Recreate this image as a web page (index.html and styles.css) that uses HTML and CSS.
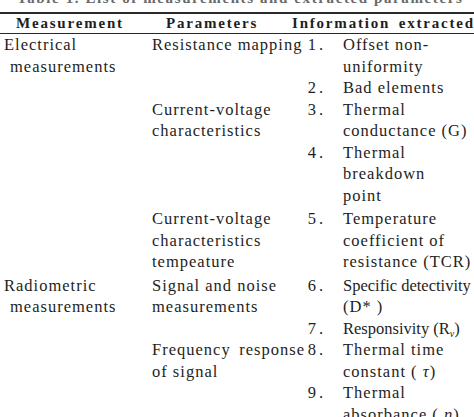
FILE: index.html
```html
<!DOCTYPE html>
<html>
<head>
<meta charset="utf-8">
<link rel="stylesheet" href="styles.css">
</head>
<body>
<div class="caption">Table 1. List of measurements and extracted parameters</div>
<div class="table">
  <div class="head">
    <div>Measurement</div>
    <div>Parameters</div>
    <div>Information extracted</div>
  </div>
  <div class="body">
    <div class="c1">Electrical<br><span class="ind">measurements</span></div>
    <div class="c2">Resistance mapping</div>
    <div class="num">1.</div>
    <div class="c4">Offset non-<br>uniformity</div>

    <div class="c1"></div>
    <div class="c2"></div>
    <div class="num">2.</div>
    <div class="c4">Bad elements</div>

    <div class="c1"></div>
    <div class="c2">Current-voltage<br>characteristics</div>
    <div class="num">3.</div>
    <div class="c4">Thermal<br>conductance (G)</div>

    <div class="c1"></div>
    <div class="c2"></div>
    <div class="num">4.</div>
    <div class="c4">Thermal<br>breakdown<br>point</div>

    <div class="c1 gap"></div>
    <div class="c2 gap">Current-voltage<br>characteristics<br>tempeature</div>
    <div class="num gap">5.</div>
    <div class="c4 gap">Temperature<br>coefficient of<br>resistance (TCR)</div>

    <div class="c1 gap">Radiometric<br><span class="ind">measurements</span></div>
    <div class="c2 gap">Signal and noise<br>measurements</div>
    <div class="num gap">6.</div>
    <div class="c4 gap"><span class="tight">Specific detectivity</span><br>(D* )</div>

    <div class="c1"></div>
    <div class="c2"></div>
    <div class="num">7.</div>
    <div class="c4"><span class="tight">Responsivity (R<sub class="sub">v</sub>)</span></div>

    <div class="c1"></div>
    <div class="c2 just">Frequency response of signal</div>
    <div class="num">8.</div>
    <div class="c4">Thermal time<br>constant ( <i>τ</i>)</div>

    <div class="c1"></div>
    <div class="c2"></div>
    <div class="num">9.</div>
    <div class="c4">Thermal<br>absorbance ( <i>η</i>)</div>
  </div>
</div>
</body>
</html>
```
FILE: styles.css
```css
html, body {
  margin: 0;
  padding: 0;
  background: #ffffff;
}
body {
  width: 474px;
  height: 417px;
  overflow: hidden;
  font-family: "Liberation Serif", serif;
  color: #1e1e1e;
}
.caption {
  margin-top: -12px;
  height: 20px;
  line-height: 20px;
  padding-left: 17px;
  font-family: "Liberation Serif", serif;
  font-size: 15px;
  font-weight: bold;
  letter-spacing: 1.6px;
  color: #6a6a6a;
  white-space: nowrap;
}
.table {
  margin-top: 4px;
}
.head {
  display: grid;
  grid-template-columns: 150px 126px 1fr;
  padding-left: 16px;
  border-top: 2px solid #2a2a2a;
  border-bottom: 1.5px solid #2a2a2a;
  height: 19px;
  line-height: 19px;
  font-family: "Liberation Serif", serif;
  font-size: 15px;
  font-weight: bold;
  letter-spacing: 1.8px;
  word-spacing: 3px;
  white-space: nowrap;
}
.body {
  display: grid;
  grid-template-columns: 152px 151px 40px 131px;
  font-family: "Liberation Serif", serif;
  font-size: 16.5px;
  line-height: 21.5px;
  letter-spacing: 1px;
}
.gap {
  padding-top: 2px;
}
.c1 {
  padding-left: 4px;
  white-space: nowrap;
}
.ind {
  padding-left: 6px;
}
.c2 {
  white-space: nowrap;
}
.c2.just {
  white-space: normal;
  text-align: justify;
  width: 153px;
}
.num {
  text-align: right;
  padding-right: 17px;
  letter-spacing: 3px;
}
.c4 {
  white-space: nowrap;
}
.tight {
  letter-spacing: 0;
}
.sub {
  font-size: 10px;
  font-style: italic;
  line-height: 0;
  vertical-align: -3px;
}
i {
  font-style: italic;
}
```
